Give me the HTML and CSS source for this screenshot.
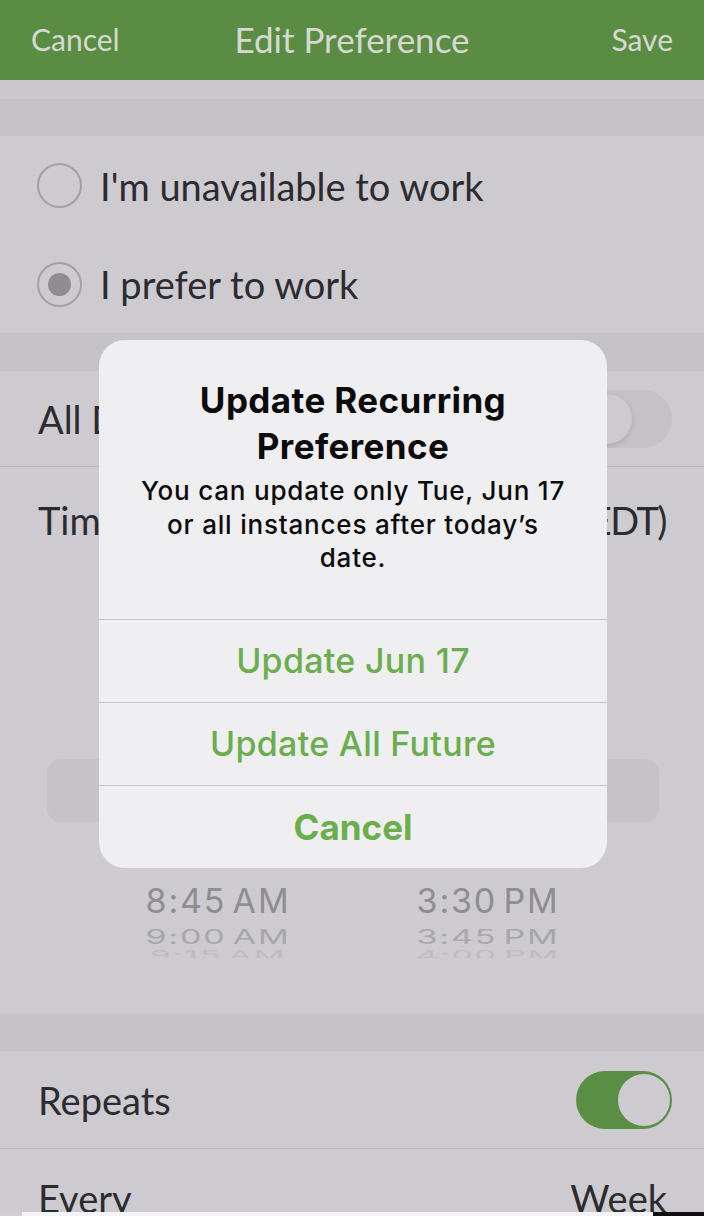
FILE: index.html
```html
<!DOCTYPE html>
<html lang="en">
<head>
  <meta charset="UTF-8" />
  <meta name="viewport" content="width=device-width, initial-scale=1.0" />
  <title>Edit Preference</title>
  <link rel="stylesheet" href="styles.css">
</head>
<body>
  <div class="screen">
    <header class="navbar">
      <span class="nav-btn">Cancel</span>
      <span class="nav-title">Edit Preference</span>
      <span class="nav-btn save">Save</span>
    </header>
    <div class="spacer"></div>

    <div class="group-gap"></div>
    <section class="group">
      <label class="radio-row"><span class="radio"></span>I'm unavailable to work</label>
      <label class="radio-row second"><span class="radio checked"></span>I prefer to work</label>
    </section>

    <div class="group-gap"></div>
    <section class="group">
      <div class="row all-day">
        <span>All Day</span>
        <span class="switch"><span class="knob"></span></span>
      </div>
      <div class="row time-row">
        <span>Time</span>
        <span class="value">8:15 AM - 3:00 PM (EDT)</span>
      </div>

      <!-- start / end wheels -->
      <div class="picker">
        <div class="wheel-row near"><span>7:45 AM</span><span>2:30 PM</span></div>
        <div class="wheel-row near"><span>8:00 AM</span><span>2:45 PM</span></div>
        <div class="wheel-row selected"><span>8:15 AM</span><span>3:00 PM</span></div>
        <div class="wheel-row near"><span>8:30 AM</span><span>3:15 PM</span></div>
        <div class="wheel-row near"><span>8:45 AM</span><span>3:30 PM</span></div>
        <div class="wheel-row tilted"><span>9:00 AM</span><span>3:45 PM</span></div>
        <div class="wheel-row edge"><span>9:15 AM</span><span>4:00 PM</span></div>
      </div>
    </section>

    <div class="group-gap"></div>
    <section class="group">
      <div class="row repeats">
        <span>Repeats</span>
        <span class="switch on"><span class="knob"></span></span>
      </div>
      <div class="row every">
        <span>Every</span>
        <span class="value">Week</span>
      </div>
    </section>
  </div>

  <div class="home-strip"><span class="edge"></span><span class="bar"></span><span class="end"></span></div>

  <div class="alert">
    <div class="alert-body">
      <h2 class="alert-title">Update Recurring Preference</h2>
      <p class="alert-msg">You can update only Tue, Jun 17 or all instances after today’s date.</p>
    </div>
    <button class="alert-btn">Update Jun 17</button>
    <button class="alert-btn">Update All Future</button>
    <button class="alert-btn cancel">Cancel</button>
  </div>
</body>
</html>
```

FILE: styles.css
```css
* {
  box-sizing: border-box;
}
body {
  margin: 0;
  width: 704px;
  height: 1216px;
  overflow: hidden;
  background: #cdcbd0;
  font-family: Lato, "Open Sans", sans-serif;
  color: #2c2b2f;
}
.screen {
  height: 1212px;
  overflow: hidden;
}

/* nav bar */
.navbar {
  height: 80px;
  background: #5a8c43;
  display: grid;
  grid-template-columns: 1fr auto 1fr;
  align-items: center;
  padding: 0 31px 3px;
  color: #d6d9d2;
}
.nav-btn {
  font-size: 30px;
}
.nav-btn.save {
  justify-self: end;
}
.nav-title {
  font-size: 35px;
}
.spacer {
  height: 19px;
  background: #cbc9ce;
}
.group-gap {
  height: 37px;
  background: #c5c3c7;
}
.group + .group-gap {
  height: 38px;
}
.group ~ .group + .group-gap {
  height: 37px;
}
.group {
  background: #cdcbd0;
}

/* radio rows */
.radio-row {
  height: 99px;
  display: flex;
  align-items: center;
  gap: 18px;
  padding-left: 37px;
  font-size: 38px;
}
.radio-row.second {
  height: 98px;
}
.radio {
  width: 45px;
  height: 45px;
  border-radius: 50%;
  border: 2.5px solid #a2a0a5;
  display: flex;
  align-items: center;
  justify-content: center;
}
.radio.checked::after {
  content: "";
  width: 23px;
  height: 23px;
  border-radius: 50%;
  background: #8f8d92;
}

/* list rows */
.row {
  display: flex;
  align-items: center;
  justify-content: space-between;
  padding: 0 32px 0 38px;
  font-size: 38px;
}
.all-day {
  height: 96px;
  border-bottom: 1px solid #b9b7bb;
}
.time-row {
  height: 105px;
  padding-right: 38px;
}
.time-row .value {
  letter-spacing: -1.5px;
}
.repeats {
  height: 98px;
  border-bottom: 1px solid #b9b7bb;
}
.every {
  height: 97px;
  padding-right: 37px;
}

.switch {
  width: 94px;
  height: 58px;
  border-radius: 29px;
  background: #c4c2c6;
  padding: 4px;
  display: flex;
}
.switch .knob {
  width: 50px;
  height: 50px;
  border-radius: 50%;
  background: #cdcbd0;
  box-shadow: 0 2px 5px rgba(0, 0, 0, 0.12);
}
.switch.on {
  width: 96px;
  background: #5a8e44;
  padding: 3px 2px;
  justify-content: flex-end;
}
.switch.on .knob {
  width: 52px;
  height: 52px;
  box-shadow: none;
}

/* time wheels */
.picker {
  padding: 82px 45px 56px 47px;
  font-family: Inter, "Liberation Sans", sans-serif;
  font-size: 34px;
  letter-spacing: 1.8px;
  word-spacing: -5px;
}
.wheel-row {
  display: grid;
  grid-template-columns: 270px 270px;
  justify-content: center;
  align-items: center;
  text-align: center;
  height: 52px;
  color: #8f8d92;
  overflow: hidden;
}
.wheel-row span {
  display: block;
}
.wheel-row.tilted {
  height: 22px;
  color: #a8a6ab;
}
.wheel-row.tilted span {
  line-height: 22px;
  transform: scaleY(0.57);
}
.wheel-row.edge {
  height: 10px;
  color: #bfbdc2;
  align-items: start;
}
.wheel-row.edge span {
  line-height: 34px;
  transform: scaleY(0.4);
  transform-origin: top;
}
.wheel-row.selected {
  height: 63px;
  margin-top: 1px;
  border-radius: 14px;
  background: #c5c3c7;
  color: #2c2b2f;
}

.home-strip {
  height: 4px;
  display: flex;
}
.home-strip .edge {
  width: 22px;
  background: #d0cfd2;
}
.home-strip .bar {
  flex: 1;
  background: #f4f3f5;
}
.home-strip .end {
  width: 51px;
  background: #111;
}

/* alert sheet */
.alert {
  position: absolute;
  top: 340px;
  left: 99px;
  width: 508px;
  border-radius: 26px;
  background: #efeef1;
  overflow: hidden;
  font-family: Inter, "Liberation Sans", sans-serif;
  text-align: center;
  color: #0b0b0c;
}
.alert-body {
  padding: 38px 32px 44px;
}
.alert-title {
  margin: 0;
  font-size: 35px;
  font-weight: 700;
  line-height: 45.5px;
  letter-spacing: 0.4px;
}
.alert-msg {
  margin: 5px 0 0;
  font-size: 26px;
  font-weight: 500;
  line-height: 33.5px;
  letter-spacing: 0.8px;
}
.alert-btn {
  display: block;
  width: 100%;
  height: 83px;
  border: 0;
  border-top: 1px solid #c4c3c7;
  background: none;
  font: 500 34px Inter, "Liberation Sans", sans-serif;
  letter-spacing: 0.3px;
  color: #6aae4d;
  padding: 0;
}
.alert-btn.cancel {
  font-weight: 700;
  font-size: 35px;
  letter-spacing: 0;
}
```
